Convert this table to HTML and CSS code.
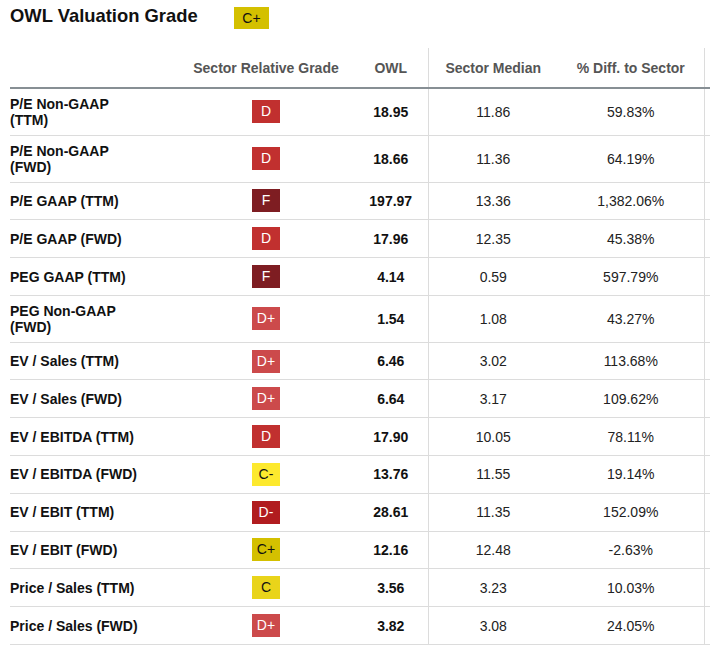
FILE: index.html
```html
<!DOCTYPE html>
<html>
<head>
<meta charset="utf-8">
<link rel="stylesheet" href="styles.css">
</head>
<body>
<div class="page">
  <div class="title-row">
    <h1 class="title">OWL Valuation Grade</h1>
    <span class="badge badge-title g-cplus">C+</span>
  </div>
  <div class="table-wrap">
    <table class="grades">
      <thead>
        <tr>
          <th class="c-label"></th>
          <th class="c-grade">Sector Relative Grade</th>
          <th class="c-owl">OWL</th>
          <th class="c-med">Sector Median</th>
          <th class="c-diff">% Diff. to Sector</th>
          <th class="c-extra"></th>
        </tr>
      </thead>
      <tbody>
        <tr><td class="c-label">P/E Non-GAAP (TTM)</td><td class="c-grade"><span class="badge g-d">D</span></td><td class="c-owl">18.95</td><td class="c-med">11.86</td><td class="c-diff">59.83%</td><td class="c-extra"></td></tr>
        <tr><td class="c-label">P/E Non-GAAP (FWD)</td><td class="c-grade"><span class="badge g-d">D</span></td><td class="c-owl">18.66</td><td class="c-med">11.36</td><td class="c-diff">64.19%</td><td class="c-extra"></td></tr>
        <tr><td class="c-label">P/E GAAP (TTM)</td><td class="c-grade"><span class="badge g-f">F</span></td><td class="c-owl">197.97</td><td class="c-med">13.36</td><td class="c-diff">1,382.06%</td><td class="c-extra"></td></tr>
        <tr><td class="c-label">P/E GAAP (FWD)</td><td class="c-grade"><span class="badge g-d">D</span></td><td class="c-owl">17.96</td><td class="c-med">12.35</td><td class="c-diff">45.38%</td><td class="c-extra"></td></tr>
        <tr><td class="c-label">PEG GAAP (TTM)</td><td class="c-grade"><span class="badge g-f">F</span></td><td class="c-owl">4.14</td><td class="c-med">0.59</td><td class="c-diff">597.79%</td><td class="c-extra"></td></tr>
        <tr><td class="c-label">PEG Non-GAAP (FWD)</td><td class="c-grade"><span class="badge g-dplus">D+</span></td><td class="c-owl">1.54</td><td class="c-med">1.08</td><td class="c-diff">43.27%</td><td class="c-extra"></td></tr>
        <tr><td class="c-label">EV / Sales (TTM)</td><td class="c-grade"><span class="badge g-dplus">D+</span></td><td class="c-owl">6.46</td><td class="c-med">3.02</td><td class="c-diff">113.68%</td><td class="c-extra"></td></tr>
        <tr><td class="c-label">EV / Sales (FWD)</td><td class="c-grade"><span class="badge g-dplus">D+</span></td><td class="c-owl">6.64</td><td class="c-med">3.17</td><td class="c-diff">109.62%</td><td class="c-extra"></td></tr>
        <tr><td class="c-label">EV / EBITDA (TTM)</td><td class="c-grade"><span class="badge g-d">D</span></td><td class="c-owl">17.90</td><td class="c-med">10.05</td><td class="c-diff">78.11%</td><td class="c-extra"></td></tr>
        <tr><td class="c-label">EV / EBITDA (FWD)</td><td class="c-grade"><span class="badge g-cminus">C-</span></td><td class="c-owl">13.76</td><td class="c-med">11.55</td><td class="c-diff">19.14%</td><td class="c-extra"></td></tr>
        <tr><td class="c-label">EV / EBIT (TTM)</td><td class="c-grade"><span class="badge g-dminus">D-</span></td><td class="c-owl">28.61</td><td class="c-med">11.35</td><td class="c-diff">152.09%</td><td class="c-extra"></td></tr>
        <tr><td class="c-label">EV / EBIT (FWD)</td><td class="c-grade"><span class="badge g-cplus">C+</span></td><td class="c-owl">12.16</td><td class="c-med">12.48</td><td class="c-diff">-2.63%</td><td class="c-extra"></td></tr>
        <tr><td class="c-label">Price / Sales (TTM)</td><td class="c-grade"><span class="badge g-c">C</span></td><td class="c-owl">3.56</td><td class="c-med">3.23</td><td class="c-diff">10.03%</td><td class="c-extra"></td></tr>
        <tr><td class="c-label">Price / Sales (FWD)</td><td class="c-grade"><span class="badge g-dplus">D+</span></td><td class="c-owl">3.82</td><td class="c-med">3.08</td><td class="c-diff">24.05%</td><td class="c-extra"></td></tr>
      </tbody>
    </table>
  </div>
</div>
</body>
</html>
```
FILE: styles.css
```css
* { box-sizing: border-box; }
html, body { margin: 0; padding: 0; background: #fff; }
body {
  font-family: "Liberation Sans", Arial, sans-serif;
  color: #222;
  overflow: hidden;
}
.page {
  padding: 3px 0 0 10px;
}
.title-row {
  display: flex;
  align-items: center;
  height: 26px;
}
.title {
  margin: 0;
  font-size: 18.4px;
  font-weight: bold;
  color: #111;
  width: 224px;
}
.badge {
  display: inline-block;
  width: 28px;
  height: 23px;
  line-height: 23px;
  text-align: center;
  font-size: 14px;
  color: #fff;
}
.badge-title {
  width: 35px;
  height: 22px;
  line-height: 22px;
  font-size: 14px;
  margin-top: 3px;
}
.g-d { background: #c1302f; color: #fff; }
.g-f { background: #7e1d22; color: #fff; }
.g-dplus { background: #cc4a4b; color: #fff; }
.g-dminus { background: #b11c1f; color: #fff; }
.g-cminus { background: #fde92e; color: #111; }
.g-cplus { background: #d4c000; color: #111; }
.g-c { background: #e9d41a; color: #111; }

.table-wrap {
  margin-top: 19px;
  width: 720px;
}
.grades {
  border-collapse: collapse;
  table-layout: fixed;
  width: 720px;
  font-size: 14px;
}
.grades th {
  height: 40px;
  padding: 0;
  font-weight: bold;
  color: #555;
  border-bottom: 2px solid #878f94;
  text-align: center;
  vertical-align: middle;
}
.grades td {
  padding: 6.9px 0 6.9px 0;
  line-height: 16px;
  border-bottom: 1px solid #dcdcdc;
  text-align: center;
  vertical-align: middle;
  color: #222;
}
.grades .c-label { width: 168px; padding-right: 36px; text-align: left; }
.grades td.c-label { font-weight: bold; color: #111; }
.grades .c-grade { width: 176px; }
.grades .c-grade .badge { display: block; margin: 0 auto; }
.grades .c-owl { width: 74px; }
.grades td.c-owl { font-weight: bold; color: #111; }
.grades .c-med { width: 130px; border-left: 1px solid #dcdcdc; }
.grades .c-diff { width: 146px; border-right: 1px solid #dcdcdc; }
.grades .c-extra { width: 26px; }
```
